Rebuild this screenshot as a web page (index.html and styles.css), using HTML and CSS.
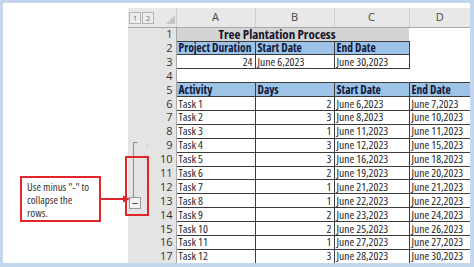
FILE: index.html
```html
<!DOCTYPE html>
<html lang="en">
<head>
  <meta charset="UTF-8" />
  <title>Tree Plantation Process</title>
  <link rel="stylesheet" href="styles.css">
</head>
<body>
  <div class="frame">
    <div class="blank"></div>

    <table class="sheet">
      <colgroup>
        <col class="c-outline">
        <col class="c-num">
        <col class="c-a">
        <col class="c-b">
        <col class="c-c">
        <col class="c-d">
      </colgroup>
      <tr class="head">
        <th class="levels"><span class="lvl">1</span><span class="lvl">2</span></th>
        <th class="corner"><span class="tri"></span></th>
        <th>A</th>
        <th>B</th>
        <th>C</th>
        <th>D</th>
      </tr>
      <tr>
        <td class="gutter" rowspan="17">
          <svg width="30" height="236" viewBox="0 0 30 236">
            <path d="M9.5 114.5 H5.5 V169" fill="none" stroke="#8f8f8f" stroke-width="1"/>
            <rect x="18.5" y="117.5" width="1" height="1" fill="#9a9a9a"/>
            <rect x="18.5" y="131.5" width="1" height="1" fill="#9a9a9a"/>
            <rect x="18.5" y="145.5" width="1" height="1" fill="#9a9a9a"/>
            <rect x="18.5" y="159.5" width="1" height="1" fill="#9a9a9a"/>
            <rect x="1.5" y="169.5" width="11" height="11" fill="#f2f2f2" stroke="#9a9a9a"/>
            <path d="M4.5 175.5 H9.5" stroke="#444" stroke-width="1"/>
          </svg>
        </td>
        <th class="num">1</th>
        <td class="title" colspan="3">Tree Plantation Process</td>
        <td></td>
      </tr>
      <tr>
        <th class="num">2</th>
        <td class="b hd">Project Duration</td>
        <td class="b hd">Start Date</td>
        <td class="b hd">End Date</td>
        <td></td>
      </tr>
      <tr>
        <th class="num">3</th>
        <td class="b r">24</td>
        <td class="b">June 6,2023</td>
        <td class="b">June 30,2023</td>
        <td></td>
      </tr>
      <tr>
        <th class="num">4</th>
        <td></td><td></td><td></td><td></td>
      </tr>
      <tr>
        <th class="num">5</th>
        <td class="b hd">Activity</td>
        <td class="b hd">Days</td>
        <td class="b hd">Start Date</td>
        <td class="b hd">End Date</td>
      </tr>
      <tr><th class="num">6</th><td class="b">Task 1</td><td class="b r">2</td><td class="b">June 6,2023</td><td class="b">June 7,2023</td></tr>
      <tr><th class="num">7</th><td class="b">Task 2</td><td class="b r">3</td><td class="b">June 8,2023</td><td class="b">June 10,2023</td></tr>
      <tr><th class="num">8</th><td class="b">Task 3</td><td class="b r">1</td><td class="b">June 11,2023</td><td class="b">June 11,2023</td></tr>
      <tr><th class="num">9</th><td class="b">Task 4</td><td class="b r">3</td><td class="b">June 12,2023</td><td class="b">June 15,2023</td></tr>
      <tr><th class="num">10</th><td class="b">Task 5</td><td class="b r">3</td><td class="b">June 16,2023</td><td class="b">June 18,2023</td></tr>
      <tr><th class="num">11</th><td class="b">Task 6</td><td class="b r">2</td><td class="b">June 19,2023</td><td class="b">June 20,2023</td></tr>
      <tr><th class="num">12</th><td class="b">Task 7</td><td class="b r">1</td><td class="b">June 21,2023</td><td class="b">June 21,2023</td></tr>
      <tr><th class="num">13</th><td class="b">Task 8</td><td class="b r">1</td><td class="b">June 22,2023</td><td class="b">June 22,2023</td></tr>
      <tr><th class="num">14</th><td class="b">Task 9</td><td class="b r">2</td><td class="b">June 23,2023</td><td class="b">June 24,2023</td></tr>
      <tr><th class="num">15</th><td class="b">Task 10</td><td class="b r">2</td><td class="b">June 25,2023</td><td class="b">June 26,2023</td></tr>
      <tr><th class="num">16</th><td class="b">Task 11</td><td class="b r">1</td><td class="b">June 27,2023</td><td class="b">June 27,2023</td></tr>
      <tr><th class="num">17</th><td class="b">Task 12</td><td class="b r">3</td><td class="b">June 28,2023</td><td class="b">June 30,2023</td></tr>
    </table>

    <!-- annotation over the outline bar -->
    <div class="callout">Use minus "-" to<br>collapse the<br>rows.</div>
    <svg class="arrow" width="30" height="10" viewBox="0 0 30 10">
      <path d="M0 5 H24" stroke="#e0262b" stroke-width="2"/>
      <path d="M22 1.5 L29 5 L22 8.5 Z" fill="#e0262b"/>
    </svg>
    <div class="ring"></div>
  </div>
</body>
</html>
```

FILE: styles.css
```css
body {
  margin: 0;
  font-family: "Open Sans", "Liberation Sans", Arial, sans-serif;
  font-stretch: 80%;
  font-size: 11.5px;
  color: #1e1e2a;
}

.frame {
  position: relative;
  display: flex;
  width: 467px;
  height: 260px;
  overflow: hidden;
  background: #fff;
  border-style: solid;
  border-color: #c3d6ee;
  border-width: 3px 4px 4px 3px;
}

.blank {
  flex: none;
  width: 125px;
}

.sheet {
  flex: none;
  margin-top: 5px;
  width: 342px;
  table-layout: fixed;
  border-collapse: collapse;
  border-spacing: 0;
}

.c-outline { width: 30px; }
.c-num { width: 18px; }
.c-a { width: 79px; }
.c-b { width: 79px; }
.c-c { width: 75px; }
.c-d { width: 61px; }

.sheet tr {
  height: 13.88px;
}

.sheet td, .sheet th {
  padding: 0 2px;
  line-height: 12px;
  white-space: nowrap;
  overflow: hidden;
  vertical-align: middle;
  text-align: left;
  font-weight: normal;
}

.head {
  height: 19px !important;
}

.head th {
  background: #e8e8e8;
  color: #444;
  font-size: 11px;
  font-stretch: 100%;
  text-align: center;
  border-bottom: 1px solid #a8a8a8;
  border-left: 1px solid #cfcfcf;
}

.head th.levels {
  border-left: none;
  padding: 0 0 0 1px;
  text-align: left;
}

.lvl {
  display: inline-block;
  width: 10px;
  height: 10px;
  line-height: 10px;
  margin-right: 1px;
  border: 1px solid #b4b4b4;
  background: #ececec;
  color: #7a7a7a;
  font-size: 8px;
  text-align: center;
  vertical-align: middle;
}

.head th.corner {
  border-left: none;
  text-align: right;
  padding: 0 1px 0 0;
}

.tri {
  display: inline-block;
  width: 0;
  height: 0;
  border-left: 9px solid transparent;
  border-bottom: 9px solid #c6c6c6;
  vertical-align: middle;
  margin-top: 3px;
}

.gutter {
  background: #e4e4e4;
  padding: 0 !important;
  vertical-align: top !important;
}

.gutter svg {
  display: block;
}

.num {
  background: #e4e4e4;
  color: #333;
  font-size: 11px;
  font-stretch: 90%;
  text-align: right !important;
  padding: 0 3px 0 0 !important;
  border-right: 1px solid #a8a8a8;
}

.title {
  background: #d4d4d4;
  font-weight: bold !important;
  font-size: 13px;
  line-height: 13px !important;
  padding-left: 42px !important;
  overflow: visible !important;
  color: #15152a;
}

.b {
  border: 1px solid #3c3c3c;
}

.hd {
  background: #9dc3e6;
  font-weight: bold !important;
  color: #10183a;
}

.r {
  text-align: right !important;
}

.callout {
  position: absolute;
  left: 17px;
  top: 173px;
  width: 81px;
  height: 46px;
  box-sizing: border-box;
  padding: 2px 0 0 5px;
  border: 2px solid #e0262b;
  background: #fff;
  color: #333;
  font-size: 11px;
  font-stretch: 82%;
  line-height: 13px;
}

.arrow {
  position: absolute;
  left: 98px;
  top: 191px;
}

.ring {
  position: absolute;
  left: 122px;
  top: 153px;
  width: 24px;
  height: 60px;
  box-sizing: border-box;
  border: 2px solid #e0262b;
}
```
